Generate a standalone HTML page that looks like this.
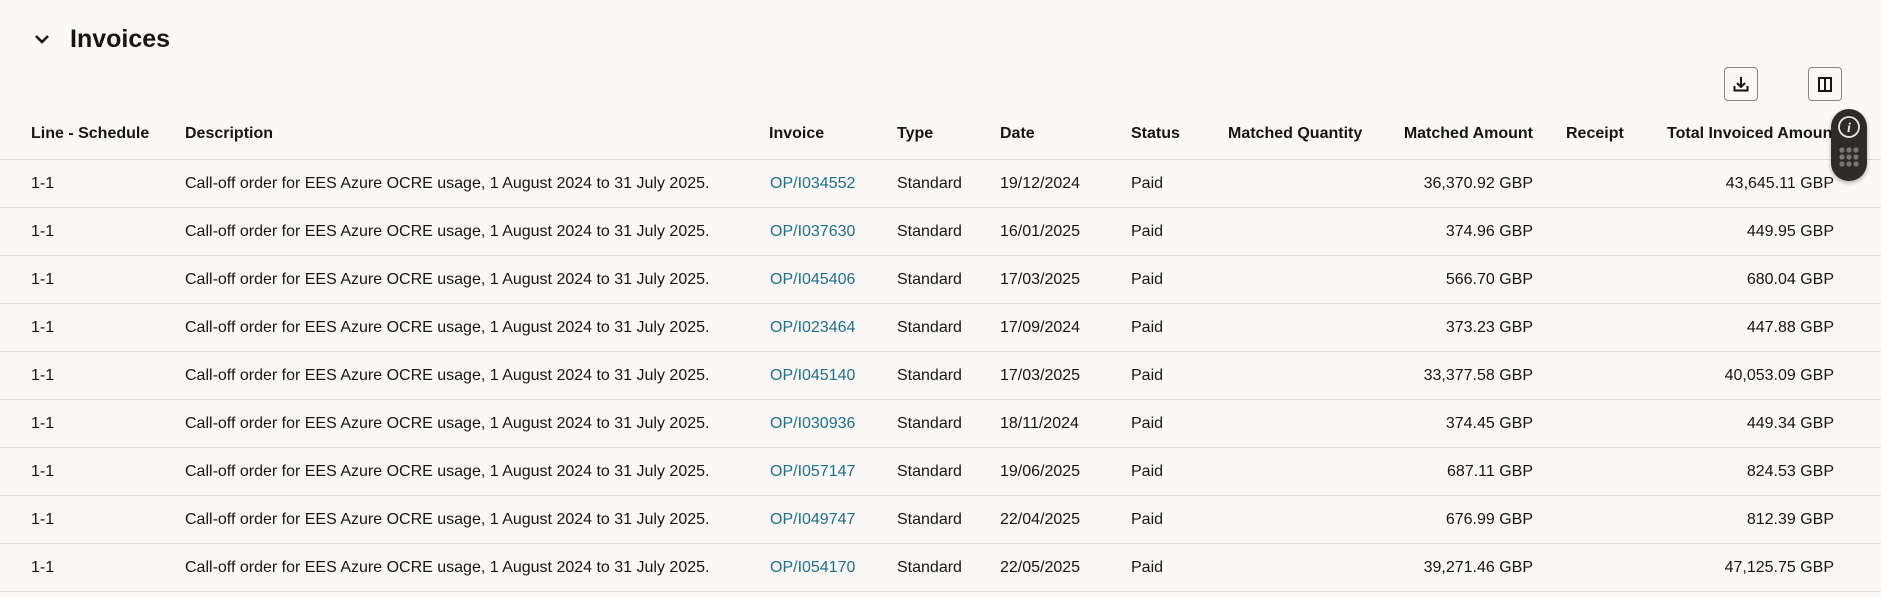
<!DOCTYPE html>
<html><head><meta charset="utf-8"><style>
body{margin:0;width:1881px;height:597px;background:#faf9f8;font-family:"Liberation Sans",sans-serif;color:#161513;overflow:hidden;position:relative}
.a{position:absolute;white-space:nowrap;font-size:16px;line-height:20px}
.h{font-weight:bold}
.r{text-align:right}
.line{position:absolute;left:0;width:1881px;height:1px;background:#dedcda}
.lnk{color:#1e6e8e}
.btn{position:absolute;width:34px;height:34px;border:1px solid #8b8985;border-radius:4px;box-sizing:border-box;top:67px}
</style></head><body>
<svg style="position:absolute;left:34px;top:33px" width="16" height="12" viewBox="0 0 16 12"><path d="M2 3 L8 9 L14 3" fill="none" stroke="#161513" stroke-width="2.6"/></svg>
<div class="a" style="left:70px;top:23px;font-size:25px;line-height:32px;font-weight:bold">Invoices</div>
<div class="btn" style="left:1724px"><svg width="34" height="34" viewBox="0 0 34 34" style="position:absolute;left:-1px;top:-1px"><path d="M17 10v10M13 16l4 4 4-4M10.5 19v4.5h13V19" fill="none" stroke="#161513" stroke-width="2"/></svg></div>
<div class="btn" style="left:1808px"><svg width="34" height="34" viewBox="0 0 34 34" style="position:absolute;left:-1px;top:-1px"><rect x="11" y="11" width="12" height="13" fill="none" stroke="#161513" stroke-width="2"/><path d="M17 11v13" stroke="#161513" stroke-width="2"/></svg></div>
<div id="hdr"></div>
<div class="line" style="top:159px"></div>
<div id="rows"></div>
<div style="position:absolute;left:1831px;top:109px;width:36px;height:72px;border-radius:18px;background:#2e2b28;box-shadow:0 2px 4px rgba(0,0,0,.3)">
<svg width="36" height="72" viewBox="0 0 36 72"><circle cx="18" cy="18" r="10" fill="none" stroke="#e8e6e3" stroke-width="1.8"/><text x="18" y="23" fill="#e8e6e3" font-family="Liberation Serif" font-style="italic" font-weight="bold" font-size="14" text-anchor="middle">i</text>
<g fill="#7a7673"><circle cx="11" cy="41" r="2.6"/><circle cx="18" cy="41" r="2.6"/><circle cx="25" cy="41" r="2.6"/><circle cx="11" cy="48" r="2.6"/><circle cx="18" cy="48" r="2.6"/><circle cx="25" cy="48" r="2.6"/><circle cx="11" cy="55" r="2.6"/><circle cx="18" cy="55" r="2.6"/><circle cx="25" cy="55" r="2.6"/></g></svg></div>
<script>
var H=[["Line - Schedule",31],["Description",185],["Invoice",769],["Type",897],["Date",1000],["Status",1131],["Matched Quantity",1228],["Receipt",1566]];
var s="";H.forEach(function(h){s+='<div class="a h" style="left:'+h[1]+'px;top:124px">'+h[0]+'</div>'});
s+='<div class="a h r" style="right:348px;top:124px">Matched Amount</div>';
s+='<div class="a h" style="left:1667px;top:124px">Total Invoiced Amount</div>';
document.getElementById("hdr").innerHTML=s;
var R=[["OP/I034552","19/12/2024","36,370.92","43,645.11"],["OP/I037630","16/01/2025","374.96","449.95"],["OP/I045406","17/03/2025","566.70","680.04"],["OP/I023464","17/09/2024","373.23","447.88"],["OP/I045140","17/03/2025","33,377.58","40,053.09"],["OP/I030936","18/11/2024","374.45","449.34"],["OP/I057147","19/06/2025","687.11","824.53"],["OP/I049747","22/04/2025","676.99","812.39"],["OP/I054170","22/05/2025","39,271.46","47,125.75"]];
s="";R.forEach(function(r,i){var t=174+i*48;
s+='<div class="a" style="left:31px;top:'+t+'px">1-1</div>';
s+='<div class="a" style="left:185px;top:'+t+'px">Call-off order for EES Azure OCRE usage, 1 August 2024 to 31 July 2025.</div>';
s+='<div class="a lnk" style="left:770px;top:'+t+'px">'+r[0]+'</div>';
s+='<div class="a" style="left:897px;top:'+t+'px">Standard</div>';
s+='<div class="a" style="left:1000px;top:'+t+'px">'+r[1]+'</div>';
s+='<div class="a" style="left:1131px;top:'+t+'px">Paid</div>';
s+='<div class="a r" style="right:348px;top:'+t+'px">'+r[2]+' GBP</div>';
s+='<div class="a r" style="right:47px;top:'+t+'px">'+r[3]+' GBP</div>';
s+='<div class="line" style="top:'+(159+(i+1)*48)+'px"></div>';});
document.getElementById("rows").innerHTML=s;
document.querySelectorAll('.a').forEach(function(e){if(!e.classList.contains('lnk'))e.style.color='#161513'});
</script>
</body></html>
